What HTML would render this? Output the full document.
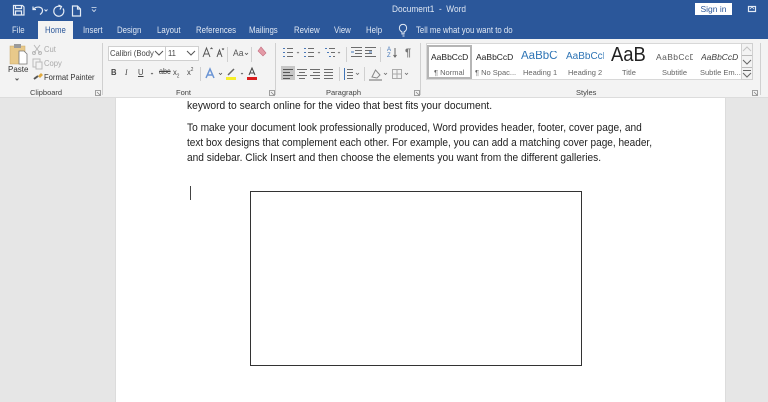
<!DOCTYPE html>
<html><head><meta charset="utf-8"><style>
html,body{margin:0;padding:0;width:768px;height:402px;overflow:hidden;background:#e6e6e6;font-family:"Liberation Sans",sans-serif}
.a{position:absolute;white-space:nowrap;line-height:1}
.tab{top:25.5px;font-size:9px;color:#dfe7f3;transform:scaleX(.87);transform-origin:0 0}
.r{color:#444;font-size:8.5px;transform:scaleX(.9);transform-origin:0 0}
.g{color:#444;font-size:7.5px;top:88.500px}
.d{color:#222;font-size:11.3px;left:187px;transform-origin:0 0}
.st{font-size:7.5px;color:#666;top:69px}
.s{font-size:8.5px;top:53px;color:#222}
.sep{position:absolute;width:1px;background:#d0d0d0}
svg{position:absolute;overflow:visible}
</style></head><body>
<div class="a" style="left:0;top:0;width:768px;height:39px;background:#2b579a"></div>
<div class="a" style="left:0;top:39px;width:768px;height:58px;background:#f3f3f3;border-bottom:1px solid #dcdcdc"></div>
<div class="a" style="left:115px;top:98px;width:611px;height:304px;box-sizing:border-box;background:#fff;border-left:1px solid #dcdcdc;border-right:1px solid #dcdcdc"></div>

<svg style="left:0;top:0" width="768" height="100" fill="none" stroke="#e4ebf5" stroke-width="1.2">
<path d="M13.500 5.500h9l1.500 1.500v8h-10.500zM15.500 5.500v3h6v-3M15.500 15v-4h6v4"/>
<path d="M33 6.500v3h3M33.500 9c3-3 9-2.500 9 1.500 0 2-1 3-2.500 4"/>
<path d="M44.500 9.500l1.500 1.500 1.500-1.500" stroke-width="1"/>
<path d="M60.500 6.500a5 5 0 1 0 2.500 2M58.500 5l3 1.500-1.500 3"/>
<path d="M72.500 6h5l3 3v7h-8zM77.500 6v3h3"/>
<path d="M91.500 7.500h5M92 9.500l2 2 2-2" stroke-width=".8"/>
<rect x="748.500" y="6.500" width="7" height="5"/><path d="M750 9l2-2 2 2" stroke-width=".8"/>
</svg>

<div class="a" style="left:392px;top:4.500px;font-size:9px;color:#dfe7f3;transform:scaleX(.92);transform-origin:0 0">Document1 &nbsp;-&nbsp; Word</div>
<div class="a" style="left:695px;top:3px;width:37px;height:12px;background:#fff;color:#2b579a;font-size:8.500px;text-align:center;line-height:12px">Sign in</div>

<div class="a" style="left:38px;top:21px;width:35px;height:19px;background:#f3f3f3"></div>
<div class="a tab" style="left:12px">File</div>
<div class="a tab" style="left:45px;color:#2b579a">Home</div>
<div class="a tab" style="left:83px">Insert</div>
<div class="a tab" style="left:117px">Design</div>
<div class="a tab" style="left:157px">Layout</div>
<div class="a tab" style="left:196px">References</div>
<div class="a tab" style="left:249px">Mailings</div>
<div class="a tab" style="left:294px">Review</div>
<div class="a tab" style="left:334px">View</div>
<div class="a tab" style="left:366px">Help</div>
<div class="a tab" style="left:416px">Tell me what you want to do</div>
<svg style="left:0;top:0" width="768" height="40" fill="none" stroke="#e4ebf5"><path d="M402 34v-2c-2-1-3-3-2.500-5 1-3.500 6-3.500 7 0 .5 2-.5 4-2.500 5v2zM402.500 36h2"/></svg>

<!-- clipboard -->
<svg style="left:0;top:40px" width="110" height="60" fill="none">
<rect x="10" y="6" width="15" height="18" fill="#e8c98a" stroke="#c9a767" stroke-width=".5"/>
<rect x="14" y="4" width="7" height="4" fill="#9a9a9a"/>
<path d="M19 11h5l3 3v10h-8z" fill="#fff" stroke="#777" stroke-width=".8"/>
<path d="M15.500 38.500l1.500 1.500 1.500-1.500" stroke="#555"/>
<path d="M34 5l6 8M40 5l-6 8" stroke="#b8b8b8"/><circle cx="34" cy="13" r="1.500" stroke="#b8b8b8"/><circle cx="40" cy="13" r="1.500" stroke="#b8b8b8"/>
<rect x="33" y="19" width="7" height="8" stroke="#bbb"/><rect x="36" y="22" width="6" height="7" fill="#f3f3f3" stroke="#bbb"/>
<path d="M34 39l4-3" stroke="#555" stroke-width="2"/><path d="M38 36l3-3 2 2-3 3z" fill="#e0a93f"/>
</svg>
<div class="a r" style="left:8px;top:66px;color:#333;transform:none;font-size:8px">Paste</div>
<div class="a r" style="left:44px;top:44.500px;color:#aaa">Cut</div>
<div class="a r" style="left:44px;top:59px;color:#aaa">Copy</div>
<div class="a r" style="left:44px;top:73px;color:#333">Format Painter</div>
<div class="a g" style="left:30px">Clipboard</div>
<div class="sep" style="left:102px;top:43px;height:52px"></div>

<!-- font -->
<div class="a" style="left:108px;top:46px;width:89px;height:13px;background:#fff;border:1px solid #d0d0d0;box-sizing:content-box"></div>
<div class="a" style="left:165px;top:46px;width:1px;height:14px;background:#ccc"></div>
<div class="a r" style="left:110px;top:49px;color:#444">Calibri (Body</div>
<div class="a r" style="left:168px;top:49px;color:#444">11</div>
<svg style="left:0;top:40px" width="300" height="60" fill="none" stroke="#555">
<path d="M155 11l4 4 4-4M187 11l4 4 4-4"/>
<path d="M203 17l3.500-9 3.500 9M204.500 14h4M210.500 9l1 -1 1 1"/><path d="M217 17l2.500-7 2.500 7M218 14h3M222 8.500l1 1 1-1"/>
<path d="M245 13l1.500 1.500 1.500-1.500M151 33l1 1 1-1M219 33l1.500 1.500 1.500-1.500M241 33l1 1 1-1" stroke-width=".8"/>
<path d="M261 7l5 6-3 3-5-5z" fill="#e39aa6" stroke="#c46c7f" stroke-width=".6"/>
<path d="M206 38l4-9 4 9M207.500 35h5" stroke="#6a94d4" stroke-width="1.500"/>
<rect x="226" y="37" width="10" height="3" fill="#f6ee2a" stroke="none"/>
<path d="M228 35l6-6" stroke="#666" stroke-width="1.500"/>
<rect x="247" y="37" width="10" height="3" fill="#d91c1c" stroke="none"/>
<path d="M249 35l3-7 3 7M250 33h4" stroke="#444"/>
</svg>
<div class="a r" style="left:111px;top:68px;font-weight:bold">B</div>
<div class="a r" style="left:125px;top:68px;font-style:italic;font-family:'Liberation Serif',serif">I</div>
<div class="a r" style="left:138px;top:68px;text-decoration:underline">U</div>
<div class="a r" style="left:159px;top:68px;font-size:8px;text-decoration:line-through">abc</div>
<div class="a r" style="left:173px;top:68px">x<sub style="font-size:5px">2</sub></div>
<div class="a r" style="left:187px;top:68px">x<sup style="font-size:5px">2</sup></div>
<div class="a r" style="left:233px;top:48.500px;font-size:9.500px;color:#555">Aa</div>
<div class="sep" style="left:227px;top:47px;height:15px"></div>
<div class="sep" style="left:251px;top:47px;height:15px"></div>
<div class="sep" style="left:200px;top:67px;height:14px"></div>
<div class="a g" style="left:176px">Font</div>
<div class="sep" style="left:275px;top:43px;height:52px"></div>

<!-- paragraph -->
<div class="a" style="left:281px;top:66px;width:14px;height:14px;background:#c6c6c6"></div>
<svg style="left:0;top:40px" width="440" height="60" fill="none" stroke="#6d6d6d">
<path d="M287 8.500h6M287 12.500h6M287 16.500h6M308 8.500h6M308 12.500h6M308 16.500h6M329 8.500h6M331 12.500h4M333 16.500h2"/>
<path d="M283 8.500h2M283 12.500h2M283 16.500h2" stroke="#4a78b8"/>
<path d="M304 8.500h2M304 12.500h2M304 16.500h2M325 8.500h2M327 12.500h2M329 16.500h2" stroke="#4a78b8"/>
<path d="M351 7.500h11M355 10.500h7M355 13.500h7M351 16.500h11M376 7.500h-11M372 10.500h-7M372 13.500h-7M376 16.500h-11"/>
<path d="M354 12h-3M369 12h3" stroke="#3f74b8"/>
<path d="M297 12l1 1 1-1M318 12l1 1 1-1M338 12l1 1 1-1" stroke-width=".8"/>
<path d="M283 29.500h10M283 32.500h7M283 35.500h10M283 38.500h7" stroke="#555"/>
<path d="M297 29.500h10M299 32.500h6M297 35.500h10M299 38.500h6M310 29.500h10M313 32.500h7M310 35.500h10M313 38.500h7M324 29.500h9M324 32.500h9M324 35.500h9M324 38.500h9"/>
<path d="M347 29.500h6M347 32.500h6M347 35.500h6M347 38.500h6"/>
<path d="M344.500 28v12" stroke="#3f74b8"/>
<path d="M356 33l1.500 1.500 1.500-1.500M384 33l1.500 1.500 1.500-1.500M405 33l1.500 1.500 1.500-1.500" stroke-width=".8"/>
<path d="M369 40h13" stroke="#999" stroke-width="1.500"/>
<path d="M372 37l3.500-7 4.500 5-3 3z" stroke="#888"/>
<rect x="392.500" y="29.500" width="9" height="9" stroke="#aaa"/><path d="M397 29.500v9M392.500 34h9" stroke="#aaa"/>
</svg>
<div class="a" style="left:387px;top:47px;font-size:6px;line-height:6px;color:#3f74b8;white-space:normal;width:6px">A<br>Z</div>
<svg style="left:0;top:40px" width="440" height="40" fill="none" stroke="#666"><path d="M395 8v9M393.500 15l1.500 2 1.500-2"/></svg>
<div class="a" style="left:405px;top:48px;font-size:11px;font-weight:bold;color:#777">¶</div>
<div class="sep" style="left:346px;top:47px;height:15px"></div>
<div class="sep" style="left:380px;top:47px;height:15px"></div>
<div class="sep" style="left:339px;top:67px;height:14px"></div>
<div class="sep" style="left:364px;top:67px;height:14px"></div>
<div class="a g" style="left:326px">Paragraph</div>
<div class="sep" style="left:420px;top:43px;height:52px"></div>

<!-- dialog launchers -->
<svg style="left:0;top:88px" width="768" height="10" fill="none" stroke="#888" stroke-width=".8"><path d="M95.500 2.500h5v5h-5zM97 4l3 3M269.500 2.500h5v5h-5zM271 4l3 3M414.500 2.500h5v5h-5zM416 4l3 3M752.500 2.500h5v5h-5zM754 4l3 3"/></svg>

<!-- styles -->
<div class="a" style="left:426px;top:43px;width:316px;height:37px;background:#fff;border:1px solid #d8d8d8;box-sizing:border-box"></div>
<div class="a" style="left:427px;top:45px;width:45px;height:34px;border:2px solid #b5b5b5;box-sizing:border-box;background:#fff"></div>
<div class="a s" style="left:431px;width:37px;overflow:hidden">AaBbCcDc</div>
<div class="a s" style="left:476px;width:37px;overflow:hidden">AaBbCcDc</div>
<div class="a" style="left:521px;top:51px;font-size:11.500px;color:#2e74b5;width:37px;overflow:hidden">AaBbCc</div>
<div class="a" style="left:566px;top:52px;font-size:10px;color:#2e74b5;width:38px;overflow:hidden">AaBbCcD</div>
<div class="a" style="left:611px;top:45px;font-size:20px;color:#222;transform:scaleX(.92);transform-origin:0 0">AaB</div>
<div class="a" style="left:656px;top:53px;font-size:8.500px;color:#595959;letter-spacing:.4px;width:37px;overflow:hidden">AaBbCcD</div>
<div class="a" style="left:701px;top:53px;font-size:8.500px;color:#404040;font-style:italic;width:37px;overflow:hidden">AaBbCcDd</div>
<div class="a st" style="left:434px">¶ Normal</div>
<div class="a st" style="left:475px">¶ No Spac...</div>
<div class="a st" style="left:523px">Heading 1</div>
<div class="a st" style="left:568px">Heading 2</div>
<div class="a st" style="left:622px">Title</div>
<div class="a st" style="left:662px">Subtitle</div>
<div class="a st" style="left:700px">Subtle Em...</div>
<svg style="left:0;top:40px" width="768" height="60" fill="none" stroke="#666">
<rect x="741.500" y="3.500" width="11" height="36" fill="#f3f3f3" stroke="#d0d0d0"/>
<path d="M742 15.500h10M742 27.500h10" stroke="#bbb"/>
<path d="M743 11l4-4 4 4" stroke="#c4c4c4"/><path d="M743 20l4 4 4-4M743 30.500h8M743 33l4 4 4-4"/>
</svg>
<div class="a g" style="left:576px">Styles</div>
<div class="sep" style="left:760px;top:43px;height:52px"></div>

<!-- doc -->
<div class="a d" style="top:101px;transform:scaleX(.91)">keyword to search online for the video that best fits your document.</div>
<div class="a d" style="top:123px;transform:scaleX(.9)">To make your document look professionally produced, Word provides header, footer, cover page, and</div>
<div class="a d" style="top:138px;transform:scaleX(.89)">text box designs that complement each other. For example, you can add a matching cover page, header,</div>
<div class="a d" style="top:153px;transform:scaleX(.9)">and sidebar. Click Insert and then choose the elements you want from the different galleries.</div>
<div class="a" style="left:190px;top:186px;width:1px;height:14px;background:#444"></div>
<div class="a" style="left:250px;top:191px;width:332px;height:175px;border:1px solid #333;box-sizing:border-box;background:#fff"></div>
</body></html>
